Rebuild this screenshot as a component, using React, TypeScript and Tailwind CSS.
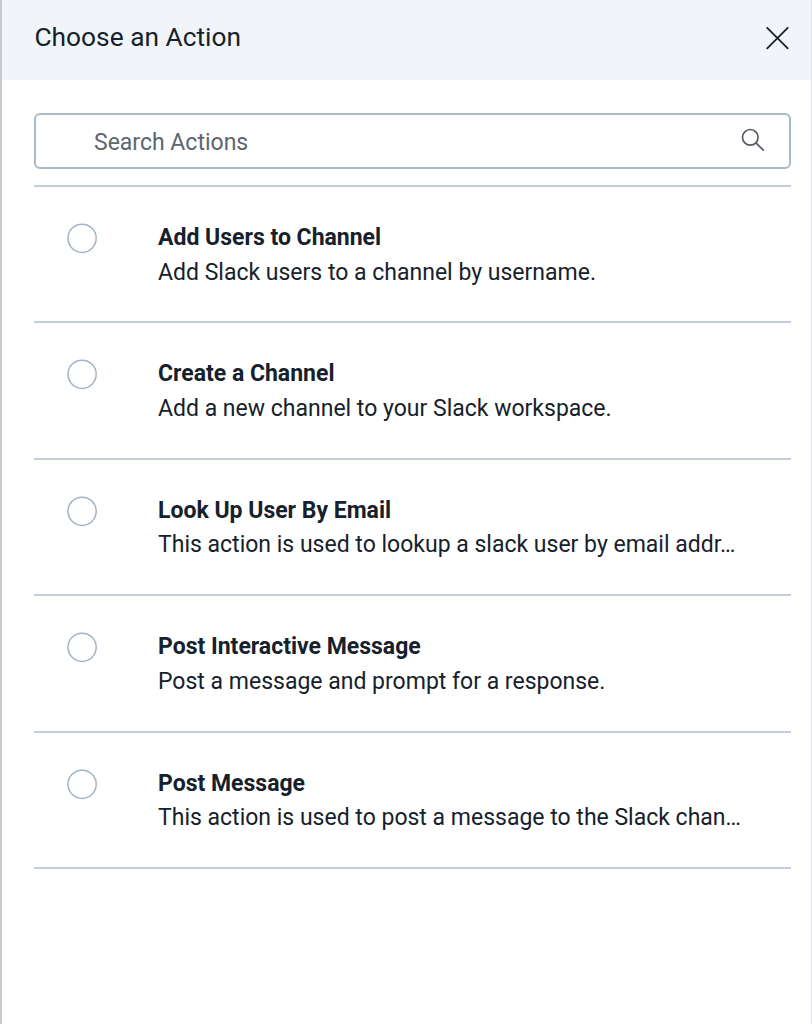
import { useState } from "react";

type Action = {
  id: string;
  name: string;
  description: string;
};

const actions: Action[] = [
  {
    id: "add-users",
    name: "Add Users to Channel",
    description: "Add Slack users to a channel by username.",
  },
  {
    id: "create-channel",
    name: "Create a Channel",
    description: "Add a new channel to your Slack workspace.",
  },
  {
    id: "lookup-user",
    name: "Look Up User By Email",
    description: "This action is used to lookup a slack user by email addr…",
  },
  {
    id: "post-interactive",
    name: "Post Interactive Message",
    description: "Post a message and prompt for a response.",
  },
  {
    id: "post-message",
    name: "Post Message",
    description: "This action is used to post a message to the Slack chan…",
  },
];

function CloseIcon() {
  return (
    <svg
      width="24"
      height="24"
      viewBox="0 0 24 24"
      fill="none"
      stroke="#16212c"
      strokeWidth="1.8"
      strokeLinecap="round"
    >
      <path d="M2.2 1.8 22.7 22.3M22.7 1.8 2.2 22.3" />
    </svg>
  );
}

function SearchIcon() {
  return (
    <svg
      width="24"
      height="24"
      viewBox="0 0 24 24"
      fill="none"
      stroke="#545c66"
      strokeWidth="1.7"
      strokeLinecap="round"
      className="overflow-visible"
    >
      <circle cx="9.3" cy="8.3" r="7.8" />
      <path d="M14.9 13.9 22.3 21.1" />
    </svg>
  );
}

function ActionRow({
  action,
  selected,
  onSelect,
}: {
  action: Action;
  selected: boolean;
  onSelect: () => void;
}) {
  return (
    <li className="h-[136.4px] border-b-2 border-[#c5cfdb]">
      <button
        role="radio"
        aria-checked={selected}
        onClick={onSelect}
        className="flex w-full items-start pt-[34px] pl-8 text-left"
      >
        <svg
          width="32"
          height="32"
          viewBox="0 0 32 32"
          fill="none"
          className="mt-px shrink-0"
        >
          <circle cx="16.1" cy="16.3" r="14.1" stroke="#a3b2c4" strokeWidth="1.5" />
          {selected && <circle cx="16" cy="16" r="8" fill="#16212c" />}
        </svg>
        <span className="ml-[60px] block w-[590px] text-[23px] leading-[34.5px]">
          <span className="block font-bold">{action.name}</span>
          <span className="block truncate">{action.description}</span>
        </span>
      </button>
    </li>
  );
}

export default function App() {
  const [query, setQuery] = useState("");
  const [selectedId, setSelectedId] = useState<string | null>(null);

  const visible = actions.filter((a) =>
    a.name.toLowerCase().includes(query.toLowerCase()),
  );

  return (
    <div className="flex h-screen flex-col border-r border-l-2 border-r-[#dfe2e6] border-l-[#c5cbd1] bg-white font-[Roboto,sans-serif] text-[#16212c]">
      <header className="flex h-20 shrink-0 items-center justify-between bg-[#f1f4f9] pr-[22px] pb-1.5 pl-[32.5px]">
        <h1 className="text-[26.3px] leading-8">Choose an Action</h1>
        <button aria-label="Close" className="mt-0.5">
          <CloseIcon />
        </button>
      </header>

      <main className="pt-[33px] pr-5 pl-8">
        <label className="flex h-14 items-center justify-between rounded-md border-2 border-[#abb9c9] pr-6 pl-[58px]">
          <input
            value={query}
            onChange={(e) => setQuery(e.target.value)}
            placeholder="Search Actions"
            className="flex-1 pt-1 text-[23px] outline-none placeholder:text-[#5d656f]"
          />
          <SearchIcon />
        </label>

        <ul
          role="radiogroup"
          className="mt-4 border-t-2 border-[#c5cfdb]"
        >
          {visible.map((action) => (
            <ActionRow
              key={action.id}
              action={action}
              selected={selectedId === action.id}
              onSelect={() => setSelectedId(action.id)}
            />
          ))}
        </ul>
      </main>
    </div>
  );
}
